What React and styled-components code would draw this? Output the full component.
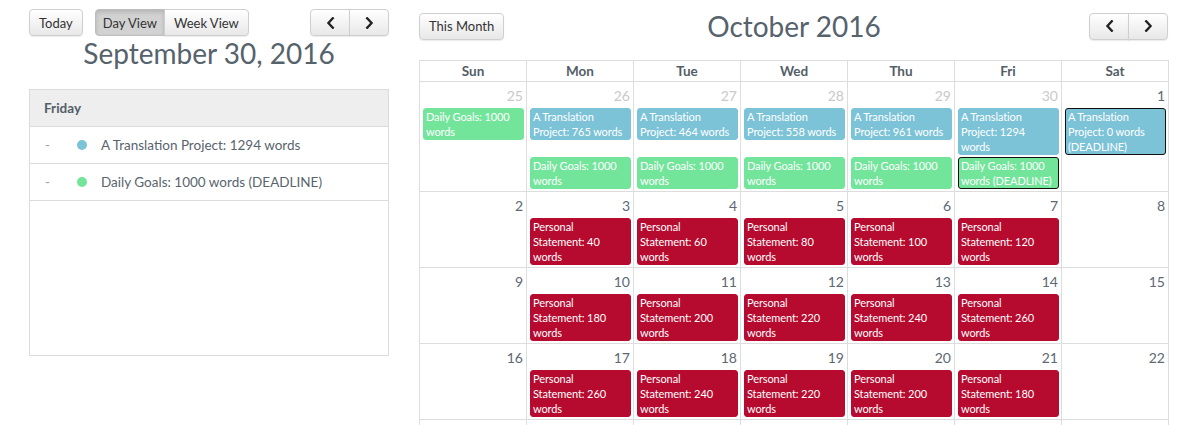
import React from "react";
import styled, { createGlobalStyle, css } from "styled-components";

const Global = createGlobalStyle`
  html, body { margin: 0; padding: 0; background: #fff; }
  body {
    font-family: Lato, "Open Sans", "Liberation Sans", sans-serif;
    color: #555f69;
    font-size: 14px;
  }
  * { box-sizing: border-box; }
`;

const Page = styled.div`
  display: flex;
  align-items: flex-start;
  gap: 30px;
  padding: 9px 0 0 29px;
  width: 1190px;
  height: 425px;
  overflow: hidden;
`;

const LeftCol = styled.div`
  width: 360px;
  display: flex;
  flex-direction: column;
`;

const RightCol = styled.div`
  width: 750px;
  display: flex;
  flex-direction: column;
`;

const Toolbar = styled.div`
  display: flex;
  justify-content: space-between;
  align-items: center;
  height: 27px;
`;

const Group = styled.div`
  display: flex;
  align-items: center;
  gap: ${(p) => p.$gap || 0}px;
`;

const Btn = styled.button`
  height: 27px;
  padding: 0 ${(p) => (p.$icon ? 0 : 9)}px;
  width: ${(p) => (p.$icon ? "40px" : "auto")};
  font-family: inherit;
  font-size: 13px;
  color: #333;
  border: 1px solid #cfcfcf;
  border-radius: 4px;
  background: linear-gradient(#ffffff, #e8e8e8);
  box-shadow: 0 1px 1px rgba(0, 0, 0, 0.08);
  display: inline-flex;
  align-items: center;
  justify-content: center;
  cursor: pointer;
  ${(p) =>
    p.$active &&
    css`
      padding: 0 7px;
      background: #d2d2d2;
      border-color: #bdbdbd;
      box-shadow: inset 0 2px 4px rgba(0, 0, 0, 0.15);
    `}
`;

const BtnGroup = styled.div`
  display: flex;
  & > ${Btn}:not(:first-child) {
    border-top-left-radius: 0;
    border-bottom-left-radius: 0;
    margin-left: -1px;
  }
  & > ${Btn}:not(:last-child) {
    border-top-right-radius: 0;
    border-bottom-right-radius: 0;
  }
`;

const Title = styled.h2`
  margin: 0;
  font-weight: 400;
  font-size: 28px;
  line-height: 34px;
  color: #56626c;
  text-align: center;
`;

const Panel = styled.div`
  margin-top: 19px;
  height: 267px;
  border: 1px solid #dcdcdc;
`;

const PanelHead = styled.div`
  height: 37px;
  background: #eeeeee;
  border-bottom: 1px solid #dcdcdc;
  display: flex;
  align-items: center;
  padding-left: 14px;
  font-weight: 700;
  font-size: 13.5px;
  color: #535e67;
`;

const ListRow = styled.div`
  height: 37px;
  border-bottom: 1px solid #dcdcdc;
  display: grid;
  grid-template-columns: 32px 24px 1fr;
  align-items: center;
  padding-left: 15px;
  font-size: 13.5px;
  color: #59646d;
`;

const Dash = styled.span`
  color: #9aa0a5;
`;

const Dot = styled.span`
  width: 10px;
  height: 10px;
  border-radius: 50%;
  background: ${(p) => p.$color};
`;

const CalHeader = styled.div`
  display: grid;
  grid-template-columns: 1fr auto 1fr;
  align-items: center;
  height: 27px;
  & > :first-child { justify-self: start; }
  & > :last-child { justify-self: end; margin-right: 1px; }
`;

const Grid = styled.div`
  margin-top: 24px;
  border-left: 1px solid #dddddd;
  border-top: 1px solid #dddddd;
`;

const HeadRow = styled.div`
  display: grid;
  grid-template-columns: repeat(7, 1fr);
  border-bottom: 1px solid #dddddd;
`;

const HeadCell = styled.div`
  height: 20px;
  line-height: 20px;
  text-align: center;
  font-weight: 700;
  font-size: 13.5px;
  color: #535e67;
  border-right: 1px solid #dddddd;
`;

const Week = styled.div`
  display: grid;
  grid-template-columns: repeat(7, 1fr);
  grid-template-rows: 26px repeat(${(p) => p.$slots}, auto) 1fr;
  min-height: 76px;
  border-bottom: 1px solid #dddddd;
`;

const Day = styled.div`
  grid-row: 1 / -1;
  display: grid;
  grid-template-rows: subgrid;
  border-right: 1px solid #dddddd;
  min-width: 0;
`;

const DayNum = styled.div`
  text-align: right;
  padding: 5px 3px 0 0;
  font-size: 14px;
  line-height: 17px;
  color: ${(p) => (p.$muted ? "#c9c9c9" : "#5d6872")};
`;

const Slot = styled.div`
  min-width: 0;
`;

const COLORS = {
  blue: "#7cc3d7",
  green: "#72e59b",
  red: "#b70a2f",
};

const Event = styled.div`
  margin: 0 2px 2px 3px;
  padding: 0 5px 0 2px;
  border: 1px solid ${(p) => (p.$deadline ? "#111" : COLORS[p.$kind])};
  border-radius: 3px;
  background: ${(p) => COLORS[p.$kind]};
  color: #fff;
  font-size: 11px;
  letter-spacing: -0.1px;
  line-height: 15px;
`;

function Chevron({ dir }) {
  return (
    <svg width="9" height="12" viewBox="0 0 9 12" aria-hidden="true">
      <path
        d={dir === "left" ? "M6.8 1.2 L2.4 6 L6.8 10.8" : "M2.2 1.2 L6.6 6 L2.2 10.8"}
        fill="none"
        stroke="#222"
        strokeWidth="2.3"
        strokeLinecap="square"
        strokeLinejoin="miter"
      />
    </svg>
  );
}

function Nav() {
  return (
    <BtnGroup>
      <Btn $icon aria-label="Previous">
        <Chevron dir="left" />
      </Btn>
      <Btn $icon aria-label="Next">
        <Chevron dir="right" />
      </Btn>
    </BtnGroup>
  );
}

const T = (w, d) => ({ kind: "blue", text: `A Translation Project: ${w} words${d ? " (DEADLINE)" : ""}`, deadline: d });
const G = (d) => ({ kind: "green", text: `Daily Goals: 1000 words${d ? " (DEADLINE)" : ""}`, deadline: d });
const P = (w) => ({ kind: "red", text: `Personal Statement: ${w} words` });

const weeks = [
  {
    slots: 2,
    days: [
      { n: 25, muted: true, ev: [G()] },
      { n: 26, muted: true, ev: [T(765), G()] },
      { n: 27, muted: true, ev: [T(464), G()] },
      { n: 28, muted: true, ev: [T(558), G()] },
      { n: 29, muted: true, ev: [T(961), G()] },
      { n: 30, muted: true, ev: [T(1294), G(true)] },
      { n: 1, ev: [T(0, true)] },
    ],
  },
  {
    slots: 1,
    days: [
      { n: 2, ev: [] },
      { n: 3, ev: [P(40)] },
      { n: 4, ev: [P(60)] },
      { n: 5, ev: [P(80)] },
      { n: 6, ev: [P(100)] },
      { n: 7, ev: [P(120)] },
      { n: 8, ev: [] },
    ],
  },
  {
    slots: 1,
    days: [
      { n: 9, ev: [] },
      { n: 10, ev: [P(180)] },
      { n: 11, ev: [P(200)] },
      { n: 12, ev: [P(220)] },
      { n: 13, ev: [P(240)] },
      { n: 14, ev: [P(260)] },
      { n: 15, ev: [] },
    ],
  },
  {
    slots: 1,
    days: [
      { n: 16, ev: [] },
      { n: 17, ev: [P(260)] },
      { n: 18, ev: [P(240)] },
      { n: 19, ev: [P(220)] },
      { n: 20, ev: [P(200)] },
      { n: 21, ev: [P(180)] },
      { n: 22, ev: [] },
    ],
  },
  {
    slots: 1,
    days: [
      { n: 23, ev: [] },
      { n: 24, ev: [P(160)] },
      { n: 25, ev: [P(140)] },
      { n: 26, ev: [P(120)] },
      { n: 27, ev: [P(100)] },
      { n: 28, ev: [P(80)] },
      { n: 29, ev: [] },
    ],
  },
];

const dayNames = ["Sun", "Mon", "Tue", "Wed", "Thu", "Fri", "Sat"];

export default function App() {
  return (
    <>
      <Global />
      <Page>
        <LeftCol>
          <Toolbar>
            <Group $gap={12}>
              <Btn>Today</Btn>
              <BtnGroup>
                <Btn $active>Day View</Btn>
                <Btn>Week View</Btn>
              </BtnGroup>
            </Group>
            <Nav />
          </Toolbar>
          <Title>September 30, 2016</Title>
          <Panel>
            <PanelHead>Friday</PanelHead>
            <ListRow>
              <Dash>-</Dash>
              <Dot $color={COLORS.blue} />
              <span>A Translation Project: 1294 words</span>
            </ListRow>
            <ListRow>
              <Dash>-</Dash>
              <Dot $color={COLORS.green} />
              <span>Daily Goals: 1000 words (DEADLINE)</span>
            </ListRow>
          </Panel>
        </LeftCol>
        <RightCol>
          <CalHeader>
            <Btn>This Month</Btn>
            <Title>October 2016</Title>
            <Nav />
          </CalHeader>
          <Grid>
            <HeadRow>
              {dayNames.map((d) => (
                <HeadCell key={d}>{d}</HeadCell>
              ))}
            </HeadRow>
            {weeks.map((w, wi) => (
              <Week key={wi} $slots={w.slots}>
                {w.days.map((d, di) => (
                  <Day key={di}>
                    <DayNum $muted={d.muted}>{d.n}</DayNum>
                    {Array.from({ length: w.slots }).map((_, si) => {
                      const e = d.ev[si];
                      return (
                        <Slot key={si}>
                          {e && (
                            <Event $kind={e.kind} $deadline={e.deadline}>
                              {e.text}
                            </Event>
                          )}
                        </Slot>
                      );
                    })}
                    <Slot />
                  </Day>
                ))}
              </Week>
            ))}
          </Grid>
        </RightCol>
      </Page>
    </>
  );
}
